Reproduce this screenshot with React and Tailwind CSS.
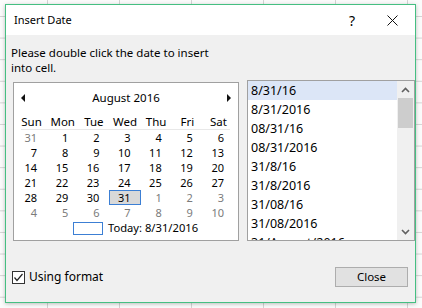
import { useState } from 'react';

const weeks = [
    [31, 1, 2, 3, 4, 5, 6],
    [7, 8, 9, 10, 11, 12, 13],
    [14, 15, 16, 17, 18, 19, 20],
    [21, 22, 23, 24, 25, 26, 27],
    [28, 29, 30, 31, 1, 2, 3],
    [4, 5, 6, 7, 8, 9, 10],
];

const dayNames = ['Sun', 'Mon', 'Tue', 'Wed', 'Thu', 'Fri', 'Sat'];

const formats = [
    '8/31/16',
    '8/31/2016',
    '08/31/16',
    '08/31/2016',
    '31/8/16',
    '31/8/2016',
    '31/08/16',
    '31/08/2016',
    '31/August/2016',
];

// days from the previous / next month are greyed out
const isOther = (w, i) => (w === 0 && i === 0) || (w === 4 && i > 3) || w === 5;

function Calendar() {
    return (
        <div className="mt-[2px] ml-[7px] w-[226px] h-[159px] border border-[#a0a0a0] bg-white pt-[5px]">
            <div className="h-[20px] flex items-center justify-between px-[7px]">
                <svg width="5" height="8" viewBox="0 0 5 8"><path d="M4 0 L0 4 L4 8 Z" fill="#111" /></svg>
                <span className="text-[11.5px] text-black">August 2016</span>
                <svg width="5" height="8" viewBox="0 0 5 8"><path d="M1 0 L5 4 L1 8 Z" fill="#111" /></svg>
            </div>
            <div className="mt-[6px] ml-[2px] w-[218px] grid grid-cols-7 h-[15px] items-center">
                {dayNames.map(n => (
                    <div key={n} className="text-center text-[11.5px] leading-[15px] text-black">{n}</div>
                ))}
            </div>
            <div className="ml-[7px] w-[209px] border-t border-[#e8e8e8]" />
            <div className="ml-[2px] w-[218px]">
                {weeks.map((week, w) => (
                    <div key={w} className="grid grid-cols-7 h-[15px]">
                        {week.map((d, i) => {
                            const selected = w === 4 && i === 3;
                            return (
                                <div
                                    key={i}
                                    className={
                                        selected
                                            ? 'text-right text-[11px] leading-[13px] pr-[9px] border border-[#3c7fd4] bg-[#d9d9d9] text-black'
                                            : isOther(w, i)
                                                ? 'text-right text-[11px] leading-[15px] pr-[10px] text-[#7b7b7b]'
                                                : 'text-right text-[11px] leading-[15px] pr-[10px] text-black'
                                    }
                                >
                                    {d}
                                </div>
                            );
                        })}
                    </div>
                ))}
            </div>
            <div className="h-[16px] flex items-center pl-[59px] gap-[5px]">
                <div className="w-[30px] h-[13px] border border-[#3c7fd4]" />
                <span className="text-[11.2px] text-black">Today: 8/31/2016</span>
            </div>
        </div>
    );
}

function FormatList() {
    const [active, setActive] = useState(0);
    return (
        <div className="ml-[8px] w-[168px] h-[161px] border border-[#a0a0a0] bg-white flex overflow-hidden">
            <div className="flex-1 overflow-hidden">
                {formats.map((f, i) => (
                    <div
                        key={f}
                        onClick={() => setActive(i)}
                        className={
                            i === active
                                ? 'h-[19px] leading-[19px] pl-[3px] text-[12.5px] text-black bg-[#dce6f7]'
                                : 'h-[19px] leading-[19px] pl-[3px] text-[12.5px] text-black'
                        }
                    >
                        {f}
                    </div>
                ))}
            </div>
            <div className="w-[17px] bg-[#f0f0f0] flex flex-col items-center">
                <div className="h-[17px] flex items-center justify-center">
                    <svg width="9" height="6" viewBox="0 0 9 6"><path d="M1 5 L4.5 1.5 L8 5" stroke="#606060" strokeWidth="1.6" fill="none" /></svg>
                </div>
                <div className="w-[15px] h-[30px] bg-[#cdcdcd]" />
                <div className="flex-1" />
                <div className="h-[17px] flex items-center justify-center">
                    <svg width="9" height="6" viewBox="0 0 9 6"><path d="M1 1 L4.5 4.5 L8 1" stroke="#606060" strokeWidth="1.6" fill="none" /></svg>
                </div>
            </div>
        </div>
    );
}

export default function App() {
    const [checked, setChecked] = useState(true);

    return (
        <div className="w-[422px] h-[308px] overflow-hidden pt-[4px] pl-[5px] bg-[#fbfbfb] bg-[linear-gradient(to_right,#d4d4d4_1px,transparent_1px),linear-gradient(to_bottom,#d4d4d4_1px,transparent_1px)] bg-[size:72px_21.6px] bg-[position:47px_16px] font-['Segoe_UI','Noto_Sans',sans-serif]">
            <div className="w-[411px] h-[299px] border border-[#45bf82] bg-[#f0f0f0] flex flex-col shadow-[0_1px_4px_rgba(0,0,0,0.25)]">
                {/* title bar */}
                <div className="h-[30px] bg-white flex items-center">
                    <span className="pl-[8px] text-[11px] text-black">Insert Date</span>
                    <div className="flex-1" />
                    <span className="w-[20px] text-center text-[14px] text-black mr-[25px]">?</span>
                    <svg className="mr-[17px]" width="11" height="11" viewBox="0 0 11 11">
                        <path d="M0.5 0.5 L10.5 10.5 M10.5 0.5 L0.5 10.5" stroke="#111" strokeWidth="1" />
                    </svg>
                </div>

                <div className="pt-[10px] pl-[5px] text-[11.5px] leading-[15px] text-black">
                    <div>Please double click the date to insert</div>
                    <div>into cell.</div>
                </div>

                <div className="mt-[5px] flex items-start">
                    <Calendar />
                    <FormatList />
                </div>

                <div className="mt-[26px] flex items-center justify-between">
                    <label className="ml-[6px] flex items-center gap-[4px] cursor-pointer" onClick={() => setChecked(!checked)}>
                        <span className="w-[13px] h-[13px] border border-[#333] bg-white flex items-center justify-center">
                            {checked && (
                                <svg width="11" height="11" viewBox="0 0 11 11">
                                    <path d="M1.5 5.5 L4 8.5 L9.5 2" stroke="#222" strokeWidth="1.2" fill="none" />
                                </svg>
                            )}
                        </span>
                        <span className="text-[12px] text-black">Using format</span>
                    </label>
                    <button className="mr-[7px] w-[73px] h-[20px] border border-[#adadad] bg-[#e1e1e1] text-[11.5px] text-black">
                        Close
                    </button>
                </div>
            </div>
        </div>
    );
}
